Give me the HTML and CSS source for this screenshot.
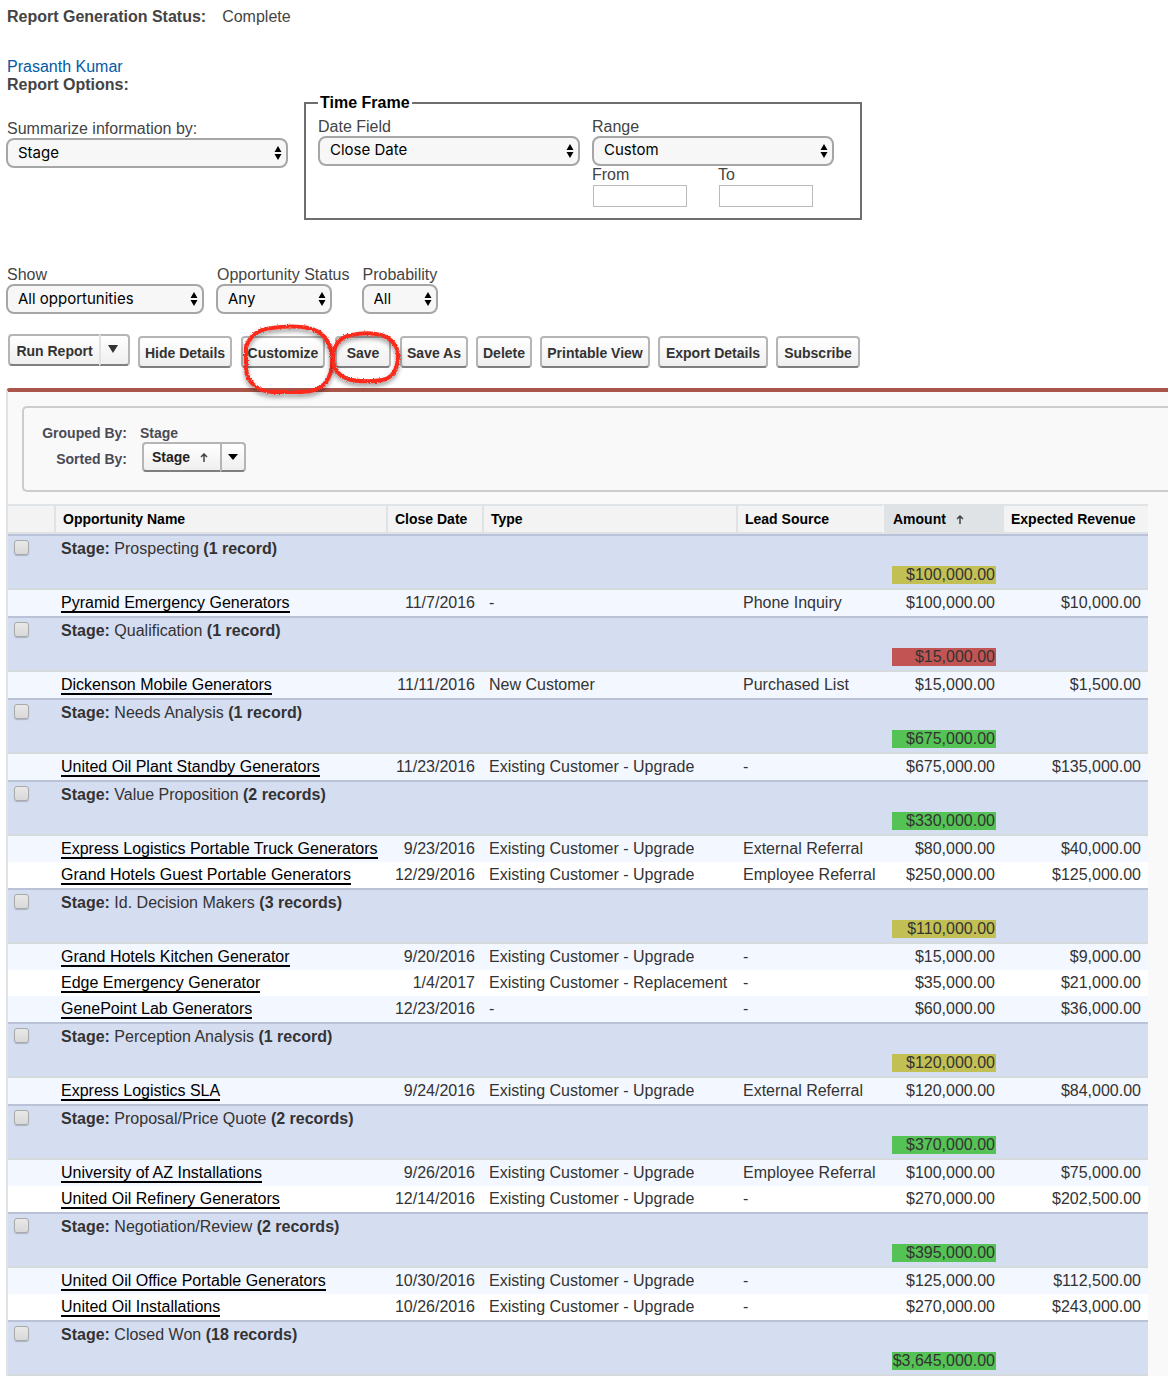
FILE: index.html
```
<!DOCTYPE html>
<html lang="en">
<head>
  <meta charset="utf-8">
  <title>Opportunity Report</title>
  <link rel="stylesheet" href="styles.css">
</head>
<body>
  <p class="status"><strong>Report Generation Status:</strong><span>Complete</span></p>

  <form class="options">
    <a class="owner" href="#">Prasanth Kumar</a>
    <h2>Report Options:</h2>

    <div class="option-row">
      <div class="field summarize">
        <label for="summarize">Summarize information by:</label>
        <span class="select">
          <select id="summarize"><option>Stage</option></select>
          <svg viewBox="0 0 8 14"><path d="M4 0 7.500 6H.5zM4 14 .5 8h7z"/></svg>
        </span>
      </div>
      <fieldset class="time-frame">
        <legend>Time Frame</legend>
        <div class="time-fields">
          <div class="field date-field">
            <label for="date-field">Date Field</label>
            <span class="select">
              <select id="date-field"><option>Close Date</option></select>
              <svg viewBox="0 0 8 14"><path d="M4 0 7.500 6H.5zM4 14 .5 8h7z"/></svg>
            </span>
          </div>
          <div class="field range">
            <label for="range">Range</label>
            <span class="select">
              <select id="range"><option>Custom</option></select>
              <svg viewBox="0 0 8 14"><path d="M4 0 7.500 6H.5zM4 14 .5 8h7z"/></svg>
            </span>
            <div class="dates">
              <div class="field"><label for="from">From</label><input type="text" id="from"></div>
              <div class="field"><label for="to">To</label><input type="text" id="to"></div>
            </div>
          </div>
        </div>
      </fieldset>
    </div>

    <div class="filters">
      <div class="field show">
        <label for="show">Show</label>
        <span class="select">
          <select id="show"><option>All opportunities</option></select>
          <svg viewBox="0 0 8 14"><path d="M4 0 7.500 6H.5zM4 14 .5 8h7z"/></svg>
        </span>
      </div>
      <div class="field opp-status">
        <label for="opp-status">Opportunity Status</label>
        <span class="select">
          <select id="opp-status"><option>Any</option></select>
          <svg viewBox="0 0 8 14"><path d="M4 0 7.500 6H.5zM4 14 .5 8h7z"/></svg>
        </span>
      </div>
      <div class="field probability">
        <label for="probability">Probability</label>
        <span class="select">
          <select id="probability"><option>All</option></select>
          <svg viewBox="0 0 8 14"><path d="M4 0 7.500 6H.5zM4 14 .5 8h7z"/></svg>
        </span>
      </div>
    </div>

    <div class="toolbar">
      <div class="split run">
        <button type="button" class="btn">Run Report</button>
        <button type="button" class="btn arrow" aria-label="Run options"><svg viewBox="0 0 10 8"><path d="M0 0h10L5 8z"/></svg></button>
      </div>
      <button type="button" class="btn w-hide">Hide Details</button>
      <div class="marked">
        <button type="button" class="btn w-medium">Customize</button>
        <svg class="mark mark-customize" viewBox="0 0 94 76">
          <defs>
            <filter id="rough" x="-10%" y="-10%" width="120%" height="120%">
              <feTurbulence type="fractalNoise" baseFrequency="0.7" numOctaves="2" seed="4"/>
              <feDisplacementMap in="SourceGraphic" scale="3" xChannelSelector="R" yChannelSelector="G"/>
            </filter>
          </defs>
          <path d="M30 5C42 3 58 3 66 5C80 8 88 18 90 32C91 42 89 52 84 59C78 67 70 69 60 69L30 69C14 68 5 58 4 46L4 24C8 12 18 6 30 5Z"/>
        </svg>
      </div>
      <div class="marked">
        <button type="button" class="btn w-small">Save</button>
        <svg class="mark mark-save" viewBox="0 0 74 58">
          <path d="M22 6C32 4 44 4 52 6C62 9 69 17 69 26C69 38 66 46 57 50C48 53 28 53 19 50C8 46 4 39 4 29C4 18 10 8 22 6Z"/>
        </svg>
      </div>
      <button type="button" class="btn w-save-as">Save As</button>
      <button type="button" class="btn w-small">Delete</button>
      <button type="button" class="btn w-large">Printable View</button>
      <button type="button" class="btn w-large">Export Details</button>
      <button type="button" class="btn w-medium">Subscribe</button>
    </div>
  </form>

  <div class="report">
    <div class="grouping">
      <span class="name">Grouped By:</span>
      <span>Stage</span>
      <span class="name sorted">Sorted By:</span>
      <div class="split sort">
        <button type="button" class="btn">Stage <svg class="up" viewBox="0 0 8 9"><path d="M4 9V1M1 4l3-3 3 3"/></svg></button>
        <button type="button" class="btn arrow" aria-label="Sort options"><svg viewBox="0 0 10 6"><path d="M0 0h10L5 6z"/></svg></button>
      </div>
    </div>

    <table>
      <colgroup>
        <col class="c-check"><col><col class="c-date"><col class="c-type"><col class="c-lead"><col class="c-amount"><col class="c-revenue">
      </colgroup>
      <thead>
        <tr>
          <th></th>
          <th>Opportunity Name</th>
          <th>Close Date</th>
          <th>Type</th>
          <th class="before-sorted">Lead Source</th>
          <th class="sorted-col">Amount <svg class="up" viewBox="0 0 8 9"><path d="M4 9V1M1 4l3-3 3 3"/></svg></th>
          <th>Expected Revenue</th>
        </tr>
      </thead>
      <tbody>
        <tr class="group">
          <td><input type="checkbox" aria-label="Prospecting"></td>
          <td colspan="4"><b>Stage:</b> Prospecting <b>(1 record)</b></td>
          <td class="num"><span class="sum mid">$100,000.00</span></td>
          <td></td>
        </tr>
        <tr><td></td><td><a href="#">Pyramid Emergency Generators</a></td><td class="num">11/7/2016</td><td>-</td><td>Phone Inquiry</td><td class="num">$100,000.00</td><td class="num">$10,000.00</td></tr>
      </tbody>
      <tbody>
        <tr class="group">
          <td><input type="checkbox" aria-label="Qualification"></td>
          <td colspan="4"><b>Stage:</b> Qualification <b>(1 record)</b></td>
          <td class="num"><span class="sum low">$15,000.00</span></td>
          <td></td>
        </tr>
        <tr><td></td><td><a href="#">Dickenson Mobile Generators</a></td><td class="num">11/11/2016</td><td>New Customer</td><td>Purchased List</td><td class="num">$15,000.00</td><td class="num">$1,500.00</td></tr>
      </tbody>
      <tbody>
        <tr class="group">
          <td><input type="checkbox" aria-label="Needs Analysis"></td>
          <td colspan="4"><b>Stage:</b> Needs Analysis <b>(1 record)</b></td>
          <td class="num"><span class="sum high">$675,000.00</span></td>
          <td></td>
        </tr>
        <tr><td></td><td><a href="#">United Oil Plant Standby Generators</a></td><td class="num">11/23/2016</td><td>Existing Customer - Upgrade</td><td>-</td><td class="num">$675,000.00</td><td class="num">$135,000.00</td></tr>
      </tbody>
      <tbody>
        <tr class="group">
          <td><input type="checkbox" aria-label="Value Proposition"></td>
          <td colspan="4"><b>Stage:</b> Value Proposition <b>(2 records)</b></td>
          <td class="num"><span class="sum high">$330,000.00</span></td>
          <td></td>
        </tr>
        <tr><td></td><td><a href="#">Express Logistics Portable Truck Generators</a></td><td class="num">9/23/2016</td><td>Existing Customer - Upgrade</td><td>External Referral</td><td class="num">$80,000.00</td><td class="num">$40,000.00</td></tr>
        <tr><td></td><td><a href="#">Grand Hotels Guest Portable Generators</a></td><td class="num">12/29/2016</td><td>Existing Customer - Upgrade</td><td>Employee Referral</td><td class="num">$250,000.00</td><td class="num">$125,000.00</td></tr>
      </tbody>
      <tbody>
        <tr class="group">
          <td><input type="checkbox" aria-label="Id. Decision Makers"></td>
          <td colspan="4"><b>Stage:</b> Id. Decision Makers <b>(3 records)</b></td>
          <td class="num"><span class="sum mid">$110,000.00</span></td>
          <td></td>
        </tr>
        <tr><td></td><td><a href="#">Grand Hotels Kitchen Generator</a></td><td class="num">9/20/2016</td><td>Existing Customer - Upgrade</td><td>-</td><td class="num">$15,000.00</td><td class="num">$9,000.00</td></tr>
        <tr><td></td><td><a href="#">Edge Emergency Generator</a></td><td class="num">1/4/2017</td><td>Existing Customer - Replacement</td><td>-</td><td class="num">$35,000.00</td><td class="num">$21,000.00</td></tr>
        <tr><td></td><td><a href="#">GenePoint Lab Generators</a></td><td class="num">12/23/2016</td><td>-</td><td>-</td><td class="num">$60,000.00</td><td class="num">$36,000.00</td></tr>
      </tbody>
      <tbody>
        <tr class="group">
          <td><input type="checkbox" aria-label="Perception Analysis"></td>
          <td colspan="4"><b>Stage:</b> Perception Analysis <b>(1 record)</b></td>
          <td class="num"><span class="sum mid">$120,000.00</span></td>
          <td></td>
        </tr>
        <tr><td></td><td><a href="#">Express Logistics SLA</a></td><td class="num">9/24/2016</td><td>Existing Customer - Upgrade</td><td>External Referral</td><td class="num">$120,000.00</td><td class="num">$84,000.00</td></tr>
      </tbody>
      <tbody>
        <tr class="group">
          <td><input type="checkbox" aria-label="Proposal/Price Quote"></td>
          <td colspan="4"><b>Stage:</b> Proposal/Price Quote <b>(2 records)</b></td>
          <td class="num"><span class="sum high">$370,000.00</span></td>
          <td></td>
        </tr>
        <tr><td></td><td><a href="#">University of AZ Installations</a></td><td class="num">9/26/2016</td><td>Existing Customer - Upgrade</td><td>Employee Referral</td><td class="num">$100,000.00</td><td class="num">$75,000.00</td></tr>
        <tr><td></td><td><a href="#">United Oil Refinery Generators</a></td><td class="num">12/14/2016</td><td>Existing Customer - Upgrade</td><td>-</td><td class="num">$270,000.00</td><td class="num">$202,500.00</td></tr>
      </tbody>
      <tbody>
        <tr class="group">
          <td><input type="checkbox" aria-label="Negotiation/Review"></td>
          <td colspan="4"><b>Stage:</b> Negotiation/Review <b>(2 records)</b></td>
          <td class="num"><span class="sum high">$395,000.00</span></td>
          <td></td>
        </tr>
        <tr><td></td><td><a href="#">United Oil Office Portable Generators</a></td><td class="num">10/30/2016</td><td>Existing Customer - Upgrade</td><td>-</td><td class="num">$125,000.00</td><td class="num">$112,500.00</td></tr>
        <tr><td></td><td><a href="#">United Oil Installations</a></td><td class="num">10/26/2016</td><td>Existing Customer - Upgrade</td><td>-</td><td class="num">$270,000.00</td><td class="num">$243,000.00</td></tr>
      </tbody>
      <tbody>
        <tr class="group">
          <td><input type="checkbox" aria-label="Closed Won"></td>
          <td colspan="4"><b>Stage:</b> Closed Won <b>(18 records)</b></td>
          <td class="num"><span class="sum high">$3,645,000.00</span></td>
          <td></td>
        </tr>
      </tbody>
    </table>
  </div>
</body>
</html>
```

FILE: styles.css
```
* {
  box-sizing: border-box;
}
body {
  margin: 0;
  padding: 8px 0 0 6px;
  font-family: Arial, "Liberation Sans", sans-serif;
  font-size: 16px;
  line-height: 18px;
  color: #444;
  background: white;
}
.status {
  display: flex;
  gap: 16px;
  margin: 0 0 32px;
}
.owner {
  display: block;
  color: #015ba7;
  text-decoration: none;
}
h2 {
  margin: 0;
  font-size: 16px;
  line-height: 18px;
}
.status, .owner, h2, .summarize label, .filters label {
  padding-left: 1px;
}
.option-row, .time-fields, .filters {
  display: flex;
  gap: 12px;
}
.option-row {
  gap: 16px;
}
.field label {
  display: block;
}
.summarize {
  width: 282px;
  padding-top: 26px;
}
.select {
  display: block;
  position: relative;
}
.select svg {
  position: absolute;
  right: 6px;
  top: 8px;
  width: 8px;
  height: 14px;
}
select {
  display: block;
  appearance: none;
  width: 100%;
  height: 30px;
  padding: 0 20px 2px 10px;
  border: 2px solid #a6a6a6;
  border-radius: 8px;
  background: #f7f7f7;
  color: black;
  font-family: Inter, sans-serif;
  font-size: 15px;
}
.time-frame {
  margin: 0;
  padding: 6px 26px 11px 12px;
  border: 2px solid #6e6e6e;
}
.time-frame select {
  padding-bottom: 4px;
}
legend {
  padding: 0 2px;
  color: black;
  font-weight: bold;
}
.date-field {
  width: 262px;
}
.range {
  width: 242px;
}
.dates {
  display: flex;
  gap: 31px;
}
.dates label {
  margin-bottom: 1px;
}
.dates input {
  display: block;
  width: 94px;
  height: 22px;
  margin-left: 1px;
  border: 1px solid #bbb;
  background: white;
}
.filters {
  margin-top: 46px;
}
.show {
  width: 198px;
}
.opp-status .select {
  width: 116px;
}
.probability .select {
  width: 76px;
}

.toolbar {
  display: flex;
  align-items: flex-end;
  gap: 8px;
  margin: 20px 0;
  padding-left: 2px;
}
.btn {
  height: 32px;
  padding: 2px 0 0;
  border: 2px solid #b5b5b5;
  border-bottom-color: #7f7f7f;
  border-radius: 4px;
  background: linear-gradient(white, #efefef);
  color: #333;
  font-family: inherit;
  font-size: 14px;
  font-weight: bold;
  white-space: nowrap;
  cursor: pointer;
}
.w-small { width: 56px; }
.w-save-as { width: 68px; }
.w-medium { width: 84px; }
.w-hide { width: 94px; }
.w-large { width: 110px; }
.split {
  display: flex;
}
.split .btn:first-child {
  border-right: 0;
  border-radius: 4px 0 0 4px;
}
.split .arrow {
  display: flex;
  align-items: center;
  justify-content: center;
  padding: 0;
  border-radius: 0 4px 4px 0;
}
.arrow svg {
  width: 10px;
  fill: currentColor;
}
.run {
  margin-bottom: 2px;
}
.run .btn:first-child {
  width: 91px;
}
.run .arrow {
  width: 31px;
  padding: 0 4px 2px 0;
  border-left: 2px solid #dfe3e6;
}
.marked {
  position: relative;
  padding: 0 1px;
}
.mark {
  position: absolute;
  overflow: visible;
  pointer-events: none;
  fill: none;
  stroke: #fb2c1c;
  stroke-width: 4;
  filter: drop-shadow(0 3px 2px rgba(0, 0, 0, 0.4));
}
.mark path {
  filter: url(#rough);
}
.mark-customize {
  left: 2px;
  top: -13px;
  width: 94px;
  height: 76px;
}
.mark-save {
  left: -5px;
  top: -7px;
  width: 74px;
  height: 58px;
}

.report {
  padding: 14px 0 0 14px;
  border-top: 4px solid #a95549;
  border-left: 2px solid #dfe3e6;
  border-radius: 4px 0 0 0;
  background: #f9f9f9;
}
.grouping {
  display: grid;
  grid-template-columns: 87px 1fr;
  column-gap: 13px;
  padding: 16px 16px 18px;
  border: 2px solid #ccc;
  border-right: 0;
  border-radius: 5px 0 0 5px;
  color: #4a4a56;
  font-size: 14px;
  font-weight: bold;
}
.name {
  text-align: right;
}
.sorted {
  padding-top: 8px;
}
.sort {
  padding-left: 2px;
}
.sort .btn {
  height: 30px;
}
.sort .btn:first-child {
  width: 78px;
  padding: 0 0 0 8px;
  color: #222;
  text-align: left;
}
.sort .arrow {
  width: 26px;
  color: black;
}
.up {
  width: 8px;
  height: 9px;
  margin-left: 6px;
  fill: none;
  stroke: #444;
  stroke-width: 1.5;
}

table {
  width: calc(100% - 6px);
  margin: 12px 0 0 -14px;
  border-collapse: separate;
  border-spacing: 0;
  table-layout: fixed;
}
.c-check { width: 48px; }
.c-date { width: 96px; }
.c-type { width: 254px; }
.c-lead { width: 146px; }
.c-amount { width: 120px; }
.c-revenue { width: 144px; }
th {
  height: 30px;
  padding: 0 7px;
  border: solid #dfe3e6;
  border-width: 2px 2px 2px 0;
  background: #f2f3f2;
  color: black;
  font-size: 14px;
  text-align: left;
  white-space: nowrap;
}
th:last-child {
  border-right: 0;
}
.before-sorted {
  border-right-color: #f2f3f2;
}
.sorted-col {
  padding-left: 9px;
  background: #dfe3e6;
}
td {
  height: 26px;
  padding: 4px 5px;
  background: white;
  color: #333;
  white-space: nowrap;
}
tr:nth-child(even) td {
  background: #f3f7ff;
}
tr:nth-child(4) td {
  background: #f3f7ff;
}
td.num {
  padding-right: 9px;
  text-align: right;
}
td.num:last-child {
  padding-right: 7px;
}
td a {
  border-bottom: 2px solid black;
  color: black;
  text-decoration: none;
}
.group td {
  height: 56px;
  border-top: 2px solid #bac2d8;
  border-bottom: 2px solid #d5dadd;
  background: #d5ddf1;
  vertical-align: top;
}
.group td.num {
  padding: 0 8px;
  vertical-align: bottom;
}
.sum {
  display: block;
  margin-bottom: 4px;
  padding-right: 1px;
}
.mid { background: #c2c054; }
.low { background: #c25454; }
.high { background: #54c254; }
input[type="checkbox"] {
  display: block;
  appearance: none;
  width: 15px;
  height: 15px;
  margin: 0 0 0 1px;
  border: 1px solid #aaa;
  border-radius: 3px;
  background: linear-gradient(#e8e8e8, #d9d9d9);
  box-shadow: 0 1px 1px rgba(0, 0, 0, 0.2);
}
```
